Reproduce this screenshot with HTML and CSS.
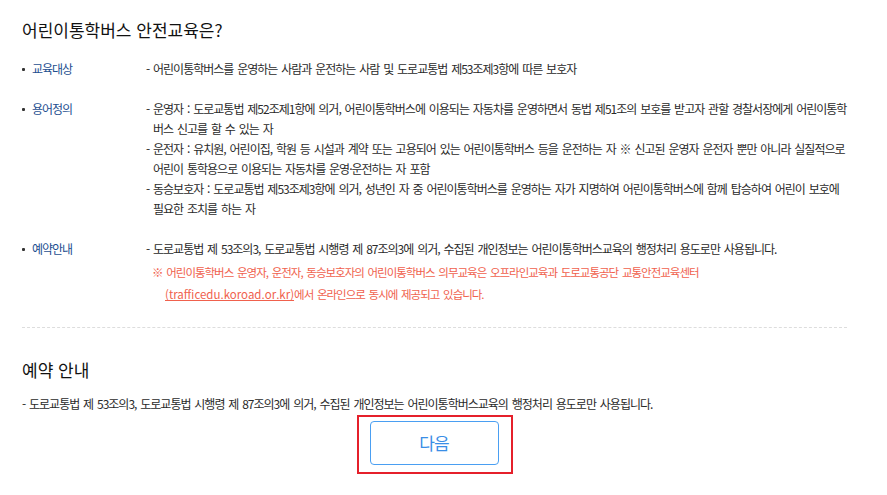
FILE: index.html
```html
<!DOCTYPE html>
<html lang="ko">
<head>
    <meta charset="UTF-8">
    <title>어린이통학버스 안전교육</title>
    <link rel="stylesheet" href="styles.css">
</head>
<body>
<div class="wrap">
    <h2 class="tit">어린이통학버스 안전교육은?</h2>
    <dl class="info">
        <div class="row">
            <dt>교육대상</dt>
            <dd>
                <p class="item">- 어린이통학버스를 운영하는 사람과 운전하는 사람 및 도로교통법 제53조제3항에 따른 보호자</p>
            </dd>
        </div>
        <div class="row">
            <dt>용어정의</dt>
            <dd>
                <p class="item">- 운영자 : 도로교통법 제52조제1항에 의거, 어린이통학버스에 이용되는 자동차를 운영하면서 동법 제51조의 보호를 받고자 관할 경찰서장에게 어린이통학<br>버스 신고를 할 수 있는 자</p>
                <p class="item">- 운전자 : 유치원, 어린이집, 학원 등 시설과 계약 또는 고용되어 있는 어린이통학버스 등을 운전하는 자 ※ 신고된 운영자 운전자 뿐만 아니라 실질적으로<br>어린이 통학용으로 이용되는 자동차를 운영·운전하는 자 포함</p>
                <p class="item">- 동승보호자 : 도로교통법 제53조제3항에 의거, 성년인 자 중 어린이통학버스를 운영하는 자가 지명하여 어린이통학버스에 함께 탑승하여 어린이 보호에<br>필요한 조치를 하는 자</p>
            </dd>
        </div>
        <div class="row">
            <dt>예약안내</dt>
            <dd>
                <p class="item">- 도로교통법 제 53조의3, 도로교통법 시행령 제 87조의3에 의거, 수집된 개인정보는 어린이통학버스교육의 행정처리 용도로만 사용됩니다.</p>
                <p class="note">※ 어린이통학버스 운영자, 운전자, 동승보호자의 어린이통학버스 의무교육은 오프라인교육과 도로교통공단 교통안전교육센터<br><a href="javascript:;">(trafficedu.koroad.or.kr)</a>에서 온라인으로 동시에 제공되고 있습니다.</p>
            </dd>
        </div>
    </dl>

    <hr class="line">

    <h2 class="tit sub">예약 안내</h2>
    <p class="desc">- 도로교통법 제 53조의3, 도로교통법 시행령 제 87조의3에 의거, 수집된 개인정보는 어린이통학버스교육의 행정처리 용도로만 사용됩니다.</p>

    <div class="btn-area">
        <span class="mark"><a href="javascript:;" class="btn-next">다음</a></span>
    </div>
</div>
</body>
</html>
```

FILE: styles.css
```css
*{
    margin: 0;
    padding: 0;
}
body{
    background-color: #fff;
    color: #2a2a2a;
    font-family: "Noto Sans CJK KR", "Noto Sans", sans-serif;
    font-size: 12px;
    letter-spacing: -1px;
    word-spacing: 1.5px;
}
.wrap{
    width: 825px;
    padding: 18px 0 0 22px;
}
.tit{
    font-size: 17px;
    font-weight: normal;
    line-height: 24px;
    color: #111;
    letter-spacing: 0;
    word-spacing: 0;
}
.info{
    margin-top: 17px;
}
.info .row{
    display: flex;
    line-height: 20px;
    margin-bottom: 20px;
}
.info dt{
    position: relative;
    width: 114px;
    padding-left: 10px;
    color: #1d4e8f;
}
/* 작은 점 */
.info dt:before{
    content: "";
    position: absolute;
    left: 0;
    top: 9px;
    width: 3px;
    height: 3px;
    border-radius: 1px;
    background-color: #333;
}
.info dd{
    flex: 1;
}
.item{
    padding-left: 7px;
    text-indent: -7px;
}
.note{
    margin-top: 2px;
    font-size: 11.5px;
    line-height: 22px;
    padding-left: 19px;
    text-indent: -13px;
    color: #f0614d;
}
.note a{
    color: #f0614d;
    letter-spacing: 0;
    text-decoration: underline;
}
.info .row:last-child{
    margin-bottom: 0;
}
.line{
    border: 0;
    border-top: 1px dashed #ddd;
    margin-top: 22px;
}
.tit.sub{
    margin-top: 30px;
}
.desc{
    margin-top: 12px;
    line-height: 20px;
}
.btn-area{
    display: flex;
    justify-content: center;
    margin-top: 1px;
}
.mark{
    display: block;
    border: 2px solid #e5202b;
    padding: 4px 12px 7px 11px;
}
.btn-next{
    display: block;
    width: 127px;
    height: 42px;
    border: 1px solid #4a9ff2;
    border-radius: 4px;
    line-height: 42px;
    text-align: center;
    font-size: 17px;
    letter-spacing: -1px;
    color: #3a8ee6;
    text-decoration: none;
}
```
